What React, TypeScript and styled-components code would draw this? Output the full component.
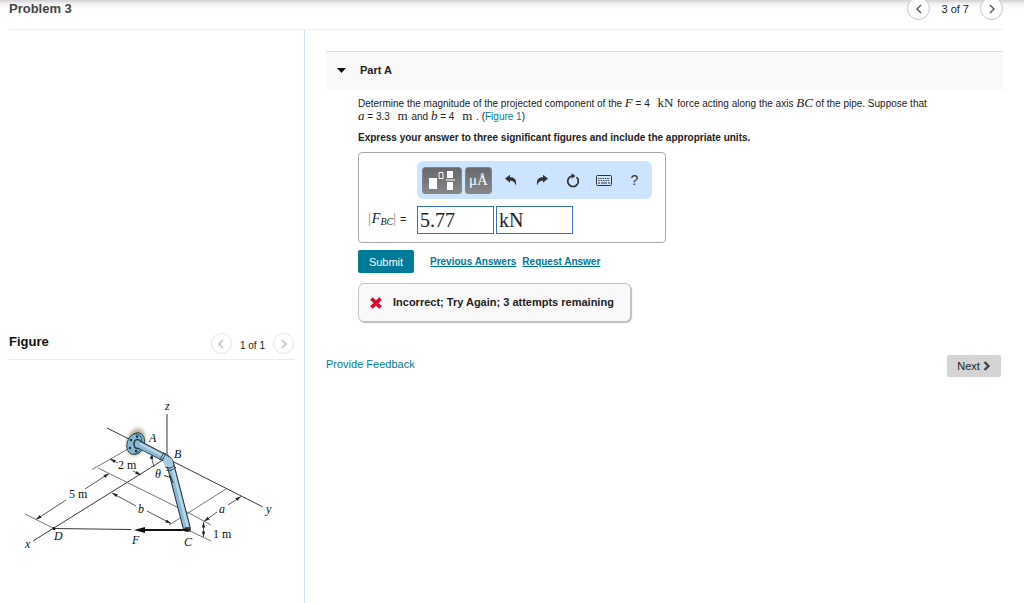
import React from "react";
import styled, { createGlobalStyle } from "styled-components";

const sans = `"Liberation Sans", Arial, Helvetica, sans-serif`;
const serif = `"Liberation Serif", "Times New Roman", serif`;

const GlobalStyle = createGlobalStyle`
  * { box-sizing: border-box; }
  html, body, #root { min-height: 100vh; }
  body { margin: 0; background: #fff; color: #222; font: 11px/13px ${sans}; }
  #root { display: flex; }
  h1, h2, h3, p { margin: 0; }
  button { font-family: inherit; padding: 0; }
`;

const Page = styled.div`
  flex: 1;
  display: flex;
  flex-direction: column;
  overflow: hidden;
  background: linear-gradient(#d2d2d2, #f3f3f3 4px, #fff 10px);
`;

const Header = styled.header`
  display: flex;
  align-items: center;
  justify-content: space-between;
  height: 30px;
  margin: 0 21px 0 9px;
  padding-bottom: 12px;
  border-bottom: 1px solid #eee;
`;

const Title = styled.h1`
  font-size: 13px;
  line-height: 16px;
  color: #444;
`;

const Pager = styled.nav`
  display: flex;
  align-items: center;
`;

const PagerText = styled.span<{ $small?: boolean }>`
  padding: ${(p) => (p.$small ? "3px 8px 0" : "2px 11px 0")};
  font-size: ${(p) => (p.$small ? 10 : 11)}px;
  color: #222;
`;

const RoundButton = styled.button<{ $faint?: boolean }>`
  display: flex;
  align-items: center;
  justify-content: center;
  width: ${(p) => (p.$faint ? 21 : 23)}px;
  height: ${(p) => (p.$faint ? 21 : 23)}px;
  flex: none;
  border: 1px solid ${(p) => (p.$faint ? "#e4e4e4" : "#c4c4c4")};
  border-radius: 50%;
  background: #fff;
  color: ${(p) => (p.$faint ? "#bbb" : "#555")};
`;

const Columns = styled.div`
  flex: 1;
  display: grid;
  grid-template-columns: 305px 1fr;
`;

const FigurePane = styled.aside`
  padding: 303px 10px 0 9px;
  border-right: 1px solid #cfdfeb;
`;

const FigureHeader = styled.div`
  display: flex;
  align-items: flex-start;
  justify-content: space-between;
  height: 27px;
  border-bottom: 1px solid #eaeaea;
`;

const FigureTitle = styled.h2`
  font-size: 13px;
  line-height: 18px;
  color: #111;
`;

const Diagram = styled.svg`
  display: block;
  width: 100%;
  margin-top: 30px;
  font-family: ${serif};
  font-size: 12px;
`;

const Main = styled.main`
  padding: 21px 21px 0;
`;

const PartHeader = styled.h2`
  display: flex;
  align-items: center;
  gap: 14px;
  height: 39px;
  padding: 0 0 2px 11px;
  border-top: 1px solid #ddd;
  background: #f9f9f9;
  font-size: 11px;
`;

const PartBody = styled.section`
  display: flex;
  flex-direction: column;
  align-items: flex-start;
  padding: 7px 40px 0 32px;
`;

const Question = styled.p`
  font-size: 10px;
  line-height: 13px;
`;

const Instruction = styled.p`
  margin-top: 8px;
  font-size: 10px;
  font-weight: bold;
`;

const Maths = styled.i`
  font: italic 13px/12px ${serif};
`;

const Unit = styled.span`
  margin: 0 1px 0 5px;
  font: 13px/12px ${serif};
`;

const Link = styled.a`
  color: #007a99;
  text-decoration: none;
`;

const AnswerBox = styled.form`
  width: 308px;
  margin-top: 8px;
  padding: 8px 13px 8px 9px;
  border: 1px solid #aaa;
  border-radius: 4px;
`;

const Toolbar = styled.div`
  display: flex;
  align-items: center;
  height: 38px;
  margin-left: 49px;
  padding-left: 5px;
  border-radius: 6px;
  background: #cce4fd;
`;

const TemplateButton = styled.button<{ $wide?: boolean }>`
  display: flex;
  align-items: center;
  justify-content: center;
  width: ${(p) => (p.$wide ? 40 : 27)}px;
  height: 27px;
  margin-right: 3px;
  border: 1px solid #85868a;
  border-radius: 3px;
  background: linear-gradient(#68696c, #85868a);
  color: #fff;
  font: 15px/20px ${serif};
`;

const ToolButton = styled.button`
  display: flex;
  align-items: center;
  justify-content: center;
  width: 31px;
  height: 27px;
  border: 0;
  background: none;
  color: #333;
  font-size: 14px;
`;

const AnswerRow = styled.div`
  display: flex;
  align-items: center;
  gap: 2px;
  margin-top: 7px;
`;

const AnswerLabel = styled.label`
  width: 47px;
  white-space: nowrap;
  font: italic 14px/20px ${serif};
`;

const Bar = styled.span`
  margin-right: 1px;
  color: #888;
  font-style: normal;
`;

const Subscript = styled.span`
  font-size: 10px;
  vertical-align: -2px;
`;

const Equals = styled.span`
  margin-left: 3px;
  font: 11px/20px ${sans};
`;

const AnswerInput = styled.input`
  width: 77px;
  height: 28px;
  padding: 0 2px;
  border: 1px solid #3b6fc4;
  border-radius: 0;
  background: #fff;
  color: #222;
  font: 20px/24px ${serif};
`;

const Actions = styled.div`
  display: flex;
  align-items: center;
  gap: 6px;
  margin-top: 7px;
`;

const SubmitButton = styled.button`
  width: 56px;
  height: 23px;
  margin-right: 10px;
  border: 0;
  border-radius: 2px;
  background: #007a99;
  color: #fff;
  font-size: 11px;
`;

const ActionLink = styled(Link)`
  font-size: 10px;
  font-weight: bold;
  text-decoration: underline;
`;

const Feedback = styled.div`
  display: flex;
  align-items: center;
  gap: 11px;
  min-width: 273px;
  height: 39px;
  margin-top: 10px;
  padding: 0 11px;
  border: 1px solid #c4c4c4;
  border-radius: 6px;
  background: #f9f9f9;
  box-shadow: 1px 1px 1px #bbb;
  font-weight: bold;
`;

const Footer = styled.footer`
  display: flex;
  align-items: flex-start;
  justify-content: space-between;
  margin-top: 33px;
  padding-right: 2px;
`;

const FooterLink = styled(Link)`
  padding-top: 3px;
`;

const NextButton = styled.button`
  display: flex;
  align-items: center;
  justify-content: center;
  gap: 3px;
  width: 54px;
  height: 22px;
  border: 0;
  border-radius: 2px;
  background: #d4d4d4;
  color: #222;
  font-size: 11px;
`;

function Chevron({ left }: { left?: boolean }) {
  return (
    <svg width="8" height="10" viewBox="0 0 8 10" fill="none" stroke="currentColor" strokeWidth="1.4">
      <path d={left ? "M6 1L2 5l4 4" : "M2 1l4 4-4 4"} />
    </svg>
  );
}

function CurvedArrow({ forward }: { forward?: boolean }) {
  return (
    <svg width="12" height="12" viewBox="0 0 12 12" fill="currentColor">
      <path
        transform={forward ? "matrix(-1 0 0 1 12 0)" : undefined}
        d="M0 4.6L5 .8v2.4c4.4 0 7 2.2 5.8 8.4C10 8.4 8.500 6.500 5 6.400v2.400z"
      />
    </svg>
  );
}

function PipeDiagram() {
  return (
    <Diagram viewBox="9 390 285 165" role="img" aria-label="Bent pipe from A through B to C with force F toward D">
      <defs>
        <marker id="dim" viewBox="0 0 7 5" markerWidth="6" markerHeight="4" refX="7" refY="2.500" orient="auto-start-reverse" markerUnits="userSpaceOnUse">
          <path d="M0 .4L7 2.500 0 4.600z" fill="#222" />
        </marker>
        <radialGradient id="halo">
          <stop offset="0.650" stopColor="#c4bba6" />
          <stop offset="1" stopColor="#ece8de" stopOpacity="0" />
        </radialGradient>
      </defs>
      <ellipse cx="136" cy="442" rx="12" ry="18" fill="url(#halo)" transform="rotate(14 136 442)" />
      <g stroke="#444" strokeWidth="0.9" fill="none">
        <path d="M107 428L130 439.500M167 414V457M172 461L263 507M33 541L163 460M54 528.500L131 529.500" stroke="#222" />
        <path d="M128 449L92 469.500M98 468L187 512M187 512L211 525M25 514L54 528.500M226 489L169 525M188 530L211 541" stroke="#666" />
        <path d="M118 463L110 459" markerEnd="url(#dim)" />
        <path d="M133 471L141 475" markerEnd="url(#dim)" />
        <path d="M85 489L109 473.500" markerEnd="url(#dim)" />
        <path d="M66 500L36 519.500" markerEnd="url(#dim)" />
        <path d="M136 506L112 493" markerEnd="url(#dim)" />
        <path d="M147 511L171 523.500" markerEnd="url(#dim)" />
        <path d="M228 505L241 496.500" markerEnd="url(#dim)" />
        <path d="M217 512L204 521.500" markerEnd="url(#dim)" />
        <path d="M203.500 522V537" markerStart="url(#dim)" markerEnd="url(#dim)" />
        <path d="M154 467Q151 460 152.500 453.500" markerEnd="url(#dim)" />
      </g>
      <g stroke="#1f3542" fill="#8fb9d3" strokeWidth="0.800">
        <ellipse cx="136.500" cy="443.500" rx="8" ry="11" transform="rotate(15 136.500 443.500)" />
        <ellipse cx="134.500" cy="444" rx="7.500" ry="10.500" fill="#86b6d2" transform="rotate(15 134.500 444)" />
        <ellipse cx="137.500" cy="444" rx="3.500" ry="4.500" strokeWidth="1.500" />
      </g>
      <g fill="#182a35">
        <circle cx="137" cy="436.500" r="1.200" />
        <circle cx="131" cy="440" r="1.200" />
        <circle cx="130" cy="448" r="1.200" />
        <circle cx="136" cy="451" r="1.200" />
      </g>
      <g fill="none" strokeLinejoin="round">
        <path d="M139 444.500L166 458.500Q170 461 171 467L187 529" stroke="#1f3542" strokeWidth="8" />
        <path d="M138.500 444.500L166 458.500Q170 461 171 467L187 529" stroke="#8db9d3" strokeWidth="6" />
        <path d="M140 443.500L166 457.500Q171 460 172 466L188 528" stroke="#b9d8ea" strokeWidth="2.400" />
      </g>
      <ellipse cx="168" cy="462" rx="4.500" ry="5.500" fill="#a6cbe0" transform="rotate(-40 168 462)" />
      <path d="M160 460L164 452M162 461L166 453M165 467Q170 470 175 465M166 470Q171 472 176 467" stroke="#1f3542" strokeWidth="0.900" fill="none" />
      <ellipse cx="187.500" cy="529.500" rx="3.500" ry="2.500" fill="#333" />
      <path d="M164 475.500L171 477.500M170 475L173 483" stroke="#222" strokeWidth="0.900" />
      <path d="M188 530H143" stroke="#111" strokeWidth="1.800" />
      <path d="M134 530L145 527v6z" fill="#111" />
      <circle cx="54" cy="528.500" r="1.500" fill="#111" />
      <g fill="#111">
        <g fontStyle="italic">
          <text x="165" y="410">z</text>
          <text x="149" y="442">A</text>
          <text x="174" y="458">B</text>
          <text x="155" y="478">θ</text>
          <text x="138" y="513">b</text>
          <text x="219" y="513">a</text>
          <text x="266" y="513">y</text>
          <text x="25" y="548">x</text>
          <text x="54" y="540">D</text>
          <text x="132" y="544">F</text>
          <text x="184" y="546">C</text>
        </g>
        <text x="118" y="469">2 m</text>
        <text x="69" y="498">5 m</text>
        <text x="213" y="538">1 m</text>
      </g>
    </Diagram>
  );
}

export default function App() {
  return (
    <Page>
      <GlobalStyle />
      <Header>
        <Title>Problem 3</Title>
        <Pager aria-label="Problems">
          <RoundButton aria-label="Previous problem"><Chevron left /></RoundButton>
          <PagerText>3 of 7</PagerText>
          <RoundButton aria-label="Next problem"><Chevron /></RoundButton>
        </Pager>
      </Header>
      <Columns>
        <FigurePane>
          <FigureHeader>
            <FigureTitle>Figure</FigureTitle>
            <Pager aria-label="Figures">
              <RoundButton $faint aria-label="Previous figure"><Chevron left /></RoundButton>
              <PagerText $small>1 of 1</PagerText>
              <RoundButton $faint aria-label="Next figure"><Chevron /></RoundButton>
            </Pager>
          </FigureHeader>
          <PipeDiagram />
        </FigurePane>
        <Main>
          <PartHeader>
            <svg width="9" height="5" viewBox="0 0 9 5"><path d="M0 0h9L4.500 5z" fill="#111" /></svg>
            Part A
          </PartHeader>
          <PartBody>
            <Question>
              Determine the magnitude of the projected component of the <Maths>F</Maths> = 4 <Unit>kN</Unit> force acting along
              the axis <Maths>BC</Maths> of the pipe. Suppose that
              <br />
              <Maths>a</Maths> = 3.3 <Unit>m</Unit> and <Maths>b</Maths> = 4 <Unit>m</Unit> . (<Link href="#figure">Figure 1</Link>)
            </Question>
            <Instruction>Express your answer to three significant figures and include the appropriate units.</Instruction>
            <AnswerBox onSubmit={(e) => e.preventDefault()} id="answer">
              <Toolbar>
                <TemplateButton type="button" $wide aria-label="Templates">
                  <svg width="26" height="20" viewBox="0 0 26 20" fill="#fff">
                    <path d="M0 8h8v11H0zM18 1h6v7h-6zM18 12h6v8h-6zM17 9.500h9v1h-9z" />
                    <path d="M10 2.500h4v6h-4z" fill="none" stroke="#fff" />
                  </svg>
                </TemplateButton>
                <TemplateButton type="button" aria-label="Units">μÅ</TemplateButton>
                <ToolButton type="button" aria-label="Undo"><CurvedArrow /></ToolButton>
                <ToolButton type="button" aria-label="Redo"><CurvedArrow forward /></ToolButton>
                <ToolButton type="button" aria-label="Reset">
                  <svg width="14" height="15" viewBox="0 0 14 15" fill="none" stroke="currentColor" strokeWidth="1.700">
                    <path d="M10.500 4.200A5.300 5.300 0 1 1 6 3" />
                    <path d="M5.500 .2L9.500 2.900 5.500 5.800z" fill="currentColor" stroke="none" />
                  </svg>
                </ToolButton>
                <ToolButton type="button" aria-label="Keyboard">
                  <svg width="16" height="11" viewBox="0 0 16 11" fill="none" stroke="currentColor">
                    <rect x=".5" y=".5" width="15" height="10" rx="1" />
                    <path d="M2 3.500h12M2.500 5.500h11" strokeDasharray="1.300 1" strokeWidth="1.200" />
                    <path d="M2 8h2M5 8h6M12 8h2" strokeWidth="1.200" />
                  </svg>
                </ToolButton>
                <ToolButton type="button" aria-label="Help">?</ToolButton>
              </Toolbar>
              <AnswerRow>
                <AnswerLabel htmlFor="value">
                  <Bar>|</Bar>F<Subscript>BC</Subscript><Bar>|</Bar><Equals>=</Equals>
                </AnswerLabel>
                <AnswerInput id="value" defaultValue="5.77" />
                <AnswerInput aria-label="Units" defaultValue="kN" />
              </AnswerRow>
            </AnswerBox>
            <Actions>
              <SubmitButton form="answer">Submit</SubmitButton>
              <ActionLink href="#previous">Previous Answers</ActionLink>
              <ActionLink href="#request">Request Answer</ActionLink>
            </Actions>
            <Feedback role="status">
              <svg width="12" height="12" viewBox="0 0 12 12" stroke="#e0002b" strokeWidth="3.600"><path d="M1.500 1.500l9 9M10.500 1.500l-9 9" /></svg>
              Incorrect; Try Again; 3 attempts remaining
            </Feedback>
          </PartBody>
          <Footer>
            <FooterLink href="#feedback">Provide Feedback</FooterLink>
            <NextButton>
              Next
              <svg width="8" height="10" viewBox="0 0 8 10" fill="none" stroke="#444" strokeWidth="2.400"><path d="M1.500 1l4 4-4 4" /></svg>
            </NextButton>
          </Footer>
        </Main>
      </Columns>
    </Page>
  );
}
